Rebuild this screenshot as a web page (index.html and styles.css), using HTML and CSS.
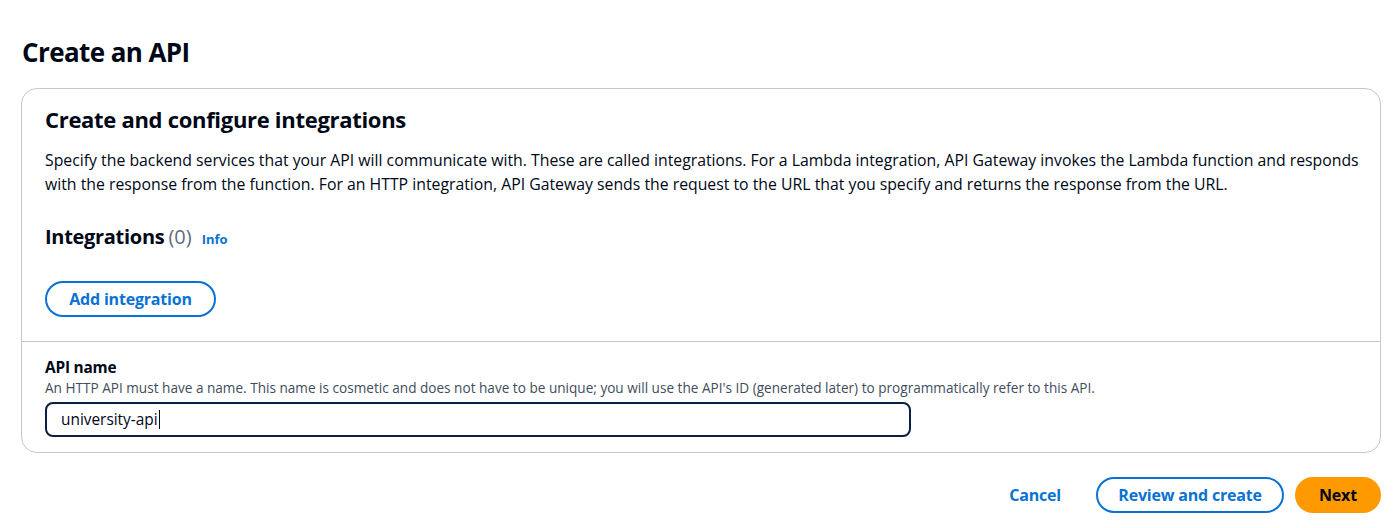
FILE: index.html
```html
<!DOCTYPE html>
<html>
<head>
<meta charset="utf-8">
<link rel="stylesheet" href="styles.css">
</head>
<body>
<div class="page">
  <h1 class="title">Create an API</h1>
  <div class="container">
    <div class="section">
      <h2 class="section-title">Create and configure integrations</h2>
      <p class="desc">Specify the backend services that your API will communicate with. These are called integrations. For a Lambda integration, API Gateway invokes the Lambda function and responds with the response from the function. For an HTTP integration, API Gateway sends the request to the URL that you specify and returns the response from the URL.</p>
      <div class="integrations-head">
        <span class="int-title">Integrations</span>
        <span class="count">(0)</span>
        <a class="info">Info</a>
      </div>
      <button class="btn btn-normal add-btn">Add integration</button>
    </div>
    <div class="section name-section">
      <div class="label">API name</div>
      <div class="hint">An HTTP API must have a name. This name is cosmetic and does not have to be unique; you will use the API's ID (generated later) to programmatically refer to this API.</div>
      <div class="input">university-api<span class="caret"></span></div>
    </div>
  </div>
  <div class="actions">
    <a class="link-btn">Cancel</a>
    <button class="btn btn-normal">Review and create</button>
    <button class="btn btn-primary">Next</button>
  </div>
</div>
</body>
</html>
```
FILE: styles.css
```css
* { box-sizing: border-box; }
html, body { margin: 0; padding: 0; background: #fff; }
body {
  font-family: "Open Sans", "Noto Sans", Arial, sans-serif;
  color: #000716;
  width: 1400px;
  height: 528px;
  overflow: hidden;
}
.page { padding: 0 19px 0 21px; }
.title {
  margin: 0;
  padding-top: 34px;
  font-size: 26px;
  line-height: 36px;
  font-weight: 700;
  letter-spacing: -0.6px;
  margin-left: 1px;
}
.container {
  margin-top: 18px;
  border: 1px solid #c6c6cd;
  border-radius: 16px;
  background: #fff;
}
.section { padding: 15px 20px 24px 23px; }
.section-title {
  margin: 0;
  font-size: 22px;
  line-height: 30px;
  font-weight: 700;
  letter-spacing: -0.3px;
}
.desc {
  margin: 14px 0 0 0;
  font-size: 15.8px;
  line-height: 24px;
}
.integrations-head {
  margin-top: 26px;
  display: flex;
  align-items: baseline;
  gap: 4px;
}
.int-title { font-size: 20px; font-weight: 700; line-height: 30px; letter-spacing: -0.3px; }
.count { font-size: 20px; color: #5f6b7a; line-height: 30px; }
.info { font-size: 13px; font-weight: 700; color: #0972d3; margin-left: 6px; }
.btn {
  font-family: inherit;
  font-size: 16px;
  font-weight: 700;
  border-radius: 20px;
  height: 36px;
  padding: 0 22px;
  cursor: pointer;
  letter-spacing: -0.2px;
}
.btn-normal {
  background: #fff;
  border: 2px solid #0972d3;
  color: #0972d3;
}
.btn-primary {
  background: #ff9900;
  border: 2px solid #ff9900;
  color: #000716;
  width: 86px;
  padding: 0;
}
.add-btn { margin-top: 29px; width: 171px; padding: 0; }
.name-section {
  border-top: 1px solid #c6c6cd;
  padding: 15px 23px 15px 23px;
}
.label { font-size: 15.4px; font-weight: 700; line-height: 22px; letter-spacing: -0.2px; }
.hint { font-size: 13.6px; color: #414d5c; line-height: 18px; }
.input {
  margin-top: 5px;
  width: 866px;
  height: 35px;
  border: 2px solid #0a1f44;
  border-radius: 8px;
  padding: 0 14px;
  font-size: 15.4px;
  line-height: 31px;
  display: flex;
  align-items: center;
}
.caret {
  display: inline-block;
  width: 1px;
  height: 19px;
  background: #000716;
  margin-left: 1px;
}
.actions {
  display: flex;
  justify-content: flex-end;
  align-items: center;
  margin-top: 24px;
  gap: 11px;
}
.link-btn {
  font-size: 16px;
  font-weight: 700;
  color: #0972d3;
  margin-right: 24px;
  letter-spacing: -0.2px;
}
.actions .btn-normal { width: 188px; padding: 0; }
```
